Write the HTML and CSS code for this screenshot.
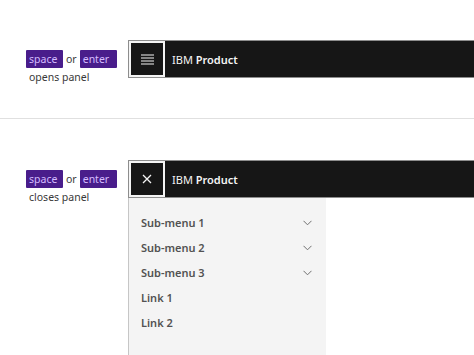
FILE: index.html
```html
<!DOCTYPE html>
<html>
<head>
  <title>UI Shell keyboard</title>
  <meta name="viewport" content="width=device-width, initial-scale=1.0">
  <link rel="stylesheet" href="styles.css">
</head>
<body>
  <section class="demo demo-open">
    <div class="legend">
      <div class="keys">
        <span class="key">space</span>
        <span class="or">or</span>
        <span class="key">enter</span>
      </div>
      <p class="hint">opens panel</p>
    </div>
    <div class="shell">
      <header class="header">
        <button class="menu-btn" aria-label="Open menu">
          <svg width="13" height="11" viewBox="0 0 13 11">
            <path d="M0 1h13M0 4h13M0 7h13M0 10h13" stroke="#f4f4f4" stroke-width="1.2" fill="none"/>
          </svg>
        </button>
        <span class="brand">IBM <b>Product</b></span>
      </header>
    </div>
  </section>

  <div class="divider"></div>

  <section class="demo demo-close">
    <div class="legend">
      <div class="keys">
        <span class="key">space</span>
        <span class="or">or</span>
        <span class="key">enter</span>
      </div>
      <p class="hint">closes panel</p>
    </div>
    <div class="shell">
      <header class="header">
        <button class="menu-btn" aria-label="Close menu">
          <svg width="10" height="10" viewBox="0 0 10 10">
            <path d="M1 1l8 8M9 1l-8 8" stroke="#f4f4f4" stroke-width="1.3" fill="none"/>
          </svg>
        </button>
        <span class="brand">IBM <b>Product</b></span>
      </header>
      <nav class="panel">
        <a class="nav-item">Sub-menu 1 <svg class="chev" width="9" height="6" viewBox="0 0 9 6"><path d="M0.5 0.8l4 4 4-4" stroke="#6f6f6f" stroke-width="1" fill="none"/></svg></a>
        <a class="nav-item">Sub-menu 2 <svg class="chev" width="9" height="6" viewBox="0 0 9 6"><path d="M0.5 0.8l4 4 4-4" stroke="#6f6f6f" stroke-width="1" fill="none"/></svg></a>
        <a class="nav-item">Sub-menu 3 <svg class="chev" width="9" height="6" viewBox="0 0 9 6"><path d="M0.5 0.8l4 4 4-4" stroke="#6f6f6f" stroke-width="1" fill="none"/></svg></a>
        <a class="nav-item">Link 1</a>
        <a class="nav-item">Link 2</a>
      </nav>
    </div>
  </section>
</body>
</html>
```

FILE: styles.css
```css
body {
  margin: 0;
  background: #fff;
  font-family: 'Noto Sans', 'Open Sans', sans-serif;
  color: #393939;
  overflow: hidden;
  height: 355px;
}
.demo {
  display: flex;
  align-items: flex-start;
}
.demo-open {
  padding-top: 40px;
  height: 78px;
}
.demo-close {
  padding-top: 41px;
}
.divider {
  height: 1px;
  background: #e0e0e0;
}
.legend {
  width: 102px;
  padding: 10px 0 0 26px;
}
.keys {
  display: flex;
  align-items: center;
  gap: 3px;
}
.key {
  background: #491d8b;
  color: #d4bbff;
  font-size: 10.5px;
  line-height: 18px;
  height: 18px;
  width: 37px;
  padding-left: 3px;
  box-sizing: border-box;
  border-radius: 1px;
}
.or {
  font-size: 10.5px;
  color: #393939;
}
.hint {
  margin: 2px 0 0 3px;
  font-size: 10.5px;
  line-height: 14px;
  color: #393939;
}
.shell {
  flex: 1;
}
.header {
  height: 38px;
  background: #161616;
  border: 1px solid #8d8d8d;
  border-right: none;
  box-sizing: border-box;
  display: flex;
  align-items: center;
}
.menu-btn {
  width: 36px;
  height: 36px;
  background: #161616;
  border: 2px solid #f4f4f4;
  box-sizing: border-box;
  display: flex;
  align-items: center;
  justify-content: center;
  padding: 0;
}
.brand {
  margin-left: 7px;
  font-size: 11px;
  color: #f4f4f4;
}
.brand b {
  font-weight: 600;
}
.panel {
  width: 198px;
  height: 158px;
  background: #f4f4f4;
  border-left: 1px solid #c6c6c6;
  box-sizing: border-box;
  padding-top: 12px;
  display: flex;
  flex-direction: column;
}
.nav-item {
  height: 25px;
  display: flex;
  align-items: center;
  justify-content: space-between;
  padding: 0 14px 0 12px;
  font-size: 11px;
  font-weight: 600;
  color: #525252;
}
```
